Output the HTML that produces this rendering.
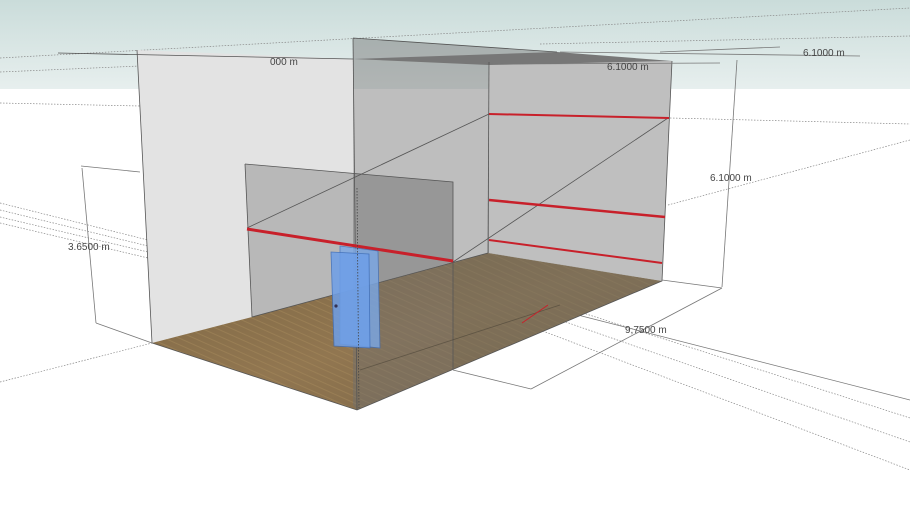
<!DOCTYPE html>
<html><head><meta charset="utf-8"><style>
html,body{margin:0;padding:0;background:#fff;width:910px;height:512px;overflow:hidden}
svg{display:block}
text{font-family:"Liberation Sans",sans-serif;font-size:10px;fill:#444}
</style></head><body>
<svg width="910" height="512" viewBox="0 0 910 512" xmlns="http://www.w3.org/2000/svg">
<defs>
<linearGradient id="sky" x1="0" y1="0" x2="0" y2="1">
<stop offset="0" stop-color="#cadcda"/><stop offset="1" stop-color="#e7efee"/>
</linearGradient>
<linearGradient id="wood" x1="0" y1="0" x2="1" y2="1">
<stop offset="0" stop-color="#7d6744"/><stop offset="0.5" stop-color="#917650"/><stop offset="1" stop-color="#7a6547"/>
</linearGradient>
<pattern id="grain" width="40" height="6" patternUnits="userSpaceOnUse" patternTransform="rotate(24)">
<rect width="40" height="6" fill="none"/><line x1="0" y1="2" x2="40" y2="2" stroke="#a58a5c" stroke-width="1" opacity="0.5"/>
</pattern>
</defs>
<rect x="0" y="0" width="910" height="89" fill="url(#sky)"/>
<g stroke="#888" stroke-width="0.7" stroke-dasharray="1.5,1.5" fill="none">
<line x1="0" y1="58" x2="910" y2="8"/>
<line x1="0" y1="72" x2="140" y2="66"/>
<line x1="0" y1="103" x2="140" y2="106"/>
<line x1="670" y1="118" x2="910" y2="124"/>
<line x1="668" y1="205" x2="910" y2="140"/>
<line x1="0" y1="203" x2="148" y2="240"/>
<line x1="0" y1="210" x2="148" y2="246"/>
<line x1="0" y1="217" x2="148" y2="252"/>
<line x1="0" y1="223" x2="148" y2="258"/>
<line x1="0" y1="382" x2="152" y2="343"/>
<line x1="580" y1="312" x2="910" y2="418"/>
<line x1="560" y1="320" x2="910" y2="442"/>
<line x1="540" y1="330" x2="910" y2="470"/>
<line x1="540" y1="44" x2="910" y2="36"/>
</g>
<line x1="570" y1="313" x2="910" y2="400" stroke="#777" stroke-width="0.7"/>
<polygon points="137,50 353,59 353,405 152,343" fill="#e3e3e3"/>
<polygon points="152,343 357,410 662,281 488,253 252,317" fill="url(#wood)"/>
<polygon points="152,343 357,410 662,281 488,253 252,317" fill="url(#grain)"/>
<polygon points="245,164 453,182 453,262 252,317" fill="#b8b8b8"/>
<polygon points="489,62 672,61 662,281 488,253" fill="#bfbfbf"/>
<polygon points="353,38 557,52 489,65 489,253 453,264 453,369 357,410 353,405" fill="#6e6e6e" opacity="0.45"/>
<polygon points="453,264 489,253 662,281 453,369" fill="#6e6a60" opacity="0.5"/>
<polygon points="353,59 557,52 672,61 489,65" fill="#777"/>
<g stroke="#555" stroke-width="0.8" fill="none">
<polyline points="137,50 152,343 357,410 662,281 672,61"/>
<line x1="353" y1="38" x2="357" y2="410"/>
<line x1="489" y1="62" x2="488" y2="253"/>
<polyline points="245,164 453,182 453,369"/>
<line x1="245" y1="164" x2="252" y2="317"/>
<line x1="252" y1="317" x2="488" y2="253"/>
<line x1="353" y1="38" x2="557" y2="52"/>
<line x1="58" y1="53" x2="353" y2="59"/>
<line x1="247" y1="228" x2="489" y2="114"/>
<line x1="453" y1="262" x2="668" y2="118"/>
<line x1="360" y1="370" x2="560" y2="305" stroke="#4a4335" opacity="0.6"/>
</g>
<g stroke="#c8202a" fill="none">
<line x1="489" y1="114" x2="669" y2="118" stroke-width="2"/>
<line x1="489" y1="200" x2="665" y2="217" stroke-width="2.5"/>
<line x1="489" y1="240" x2="662" y2="263" stroke-width="2"/>
<line x1="247" y1="229" x2="453" y2="261" stroke-width="3"/>
<line x1="522" y1="323" x2="548" y2="305" stroke-width="1"/>
</g>
<polygon points="340,246 378,251 380,348 340,344" fill="#7aa8e8" opacity="0.8" stroke="#3c6cb8" stroke-width="0.8"/>
<polygon points="331,252 369,254 370,348 334,346" fill="#6e9fe8" opacity="0.85" stroke="#3c6cb8" stroke-width="0.8"/>
<circle cx="336" cy="306" r="1.6" fill="#335"/>
<line x1="357" y1="188" x2="359" y2="408" stroke="#444" stroke-width="0.8" stroke-dasharray="1.5,1.5"/>
<g stroke="#777" stroke-width="0.8" fill="none">
<line x1="81" y1="166" x2="140" y2="172"/>
<line x1="82" y1="168" x2="96" y2="323"/>
<line x1="96" y1="323" x2="152" y2="343"/>
<line x1="737" y1="60" x2="722" y2="287"/>
<line x1="662" y1="280" x2="722" y2="288"/>
<line x1="722" y1="288" x2="531" y2="389"/>
<line x1="453" y1="370" x2="531" y2="389"/>
<line x1="490" y1="64" x2="720" y2="63"/>
<line x1="560" y1="52" x2="860" y2="56"/>
<line x1="660" y1="52" x2="780" y2="47"/>
</g>
<text x="270" y="65">000 m</text>
<text x="607" y="70">6.1000 m</text>
<text x="803" y="56">6.1000 m</text>
<text x="710" y="181">6.1000 m</text>
<text x="68" y="250">3.6500 m</text>
<text x="625" y="333">9,7500 m</text>
</svg>
</body></html>
